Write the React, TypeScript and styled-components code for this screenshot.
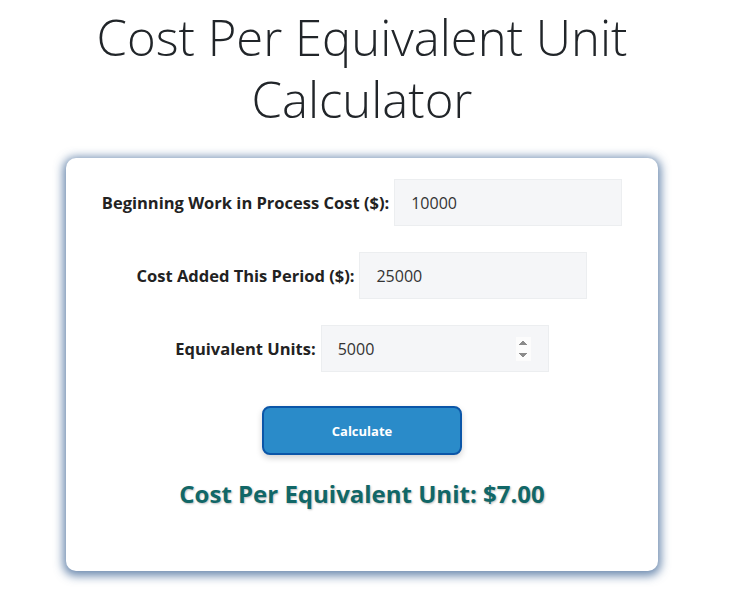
import styled, { createGlobalStyle } from "styled-components";

const GlobalStyle = createGlobalStyle`
    body {
        margin: 0;
        background: #ffffff;
        font-family: "Segoe UI", "Open Sans", "Noto Sans", sans-serif;
        color: #212529;
    }
`
const Page = styled.div`
    display: flex;
    flex-direction: column;
    align-items: center;
    padding: 0 6px 27px 0;
`
const Title = styled.h1`
    margin: 6px 0 28px;
    font-size: 49px;
    font-weight: 300;
    line-height: 62px;
    text-align: center;
    width: 560px;
`
const Card = styled.div`
    width: 592px;
    box-sizing: border-box;
    background: #ffffff;
    border-radius: 10px;
    box-shadow: 0 2px 10px 3px rgba(55, 95, 145, 0.72);
    padding: 21px 0 61px;
    display: flex;
    flex-direction: column;
    align-items: center;
`
const Row = styled.div`
    display: flex;
    align-items: center;
    justify-content: center;
    gap: 5px;
    margin-bottom: 26px;
`
const Label = styled.label`
    font-weight: 700;
    font-size: 16.5px;
    color: #222;
`
const Input = styled.input`
    width: 228px;
    height: 47px;
    box-sizing: border-box;
    padding: 0 16px;
    border: 1px solid #eceef0;
    background: #f5f6f8;
    font-family: inherit;
    font-size: 16px;
    color: #333;
    outline: none;
    &::-webkit-inner-spin-button {
        opacity: 1;
        height: 24px;
        margin-right: 1px;
    }
`
const Button = styled.button`
    margin-top: 8px;
    width: 200px;
    height: 49px;
    border-radius: 8px;
    border: 2px solid #0b56a8;
    background: #2a8bc9;
    color: #ffffff;
    font-family: inherit;
    font-weight: 700;
    font-size: 13px;
    box-shadow: 0 3px 6px rgba(0, 0, 0, 0.18);
    cursor: pointer;
`
const Result = styled.div`
    margin-top: 22px;
    font-size: 24px;
    font-weight: 700;
    color: #116767;
    text-shadow: 1px 1px 2px rgba(0, 0, 0, 0.25);
`

const fields = [
    { id: "wip", label: "Beginning Work in Process Cost ($):", value: "10000", type: "text" },
    { id: "added", label: "Cost Added This Period ($):", value: "25000", type: "text" },
    { id: "units", label: "Equivalent Units:", value: "5000", type: "number" },
];

function App() {
    return (
        <Page>
            <GlobalStyle />
            <Title>Cost Per Equivalent Unit Calculator</Title>
            <Card>
                {fields.map(f => (
                    <Row key={f.id}>
                        <Label htmlFor={f.id}>{f.label}</Label>
                        <Input id={f.id} type={f.type} defaultValue={f.value} />
                    </Row>
                ))}
                <Button>Calculate</Button>
                <Result>Cost Per Equivalent Unit: $7.00</Result>
            </Card>
        </Page>
    );
}

export default App;
